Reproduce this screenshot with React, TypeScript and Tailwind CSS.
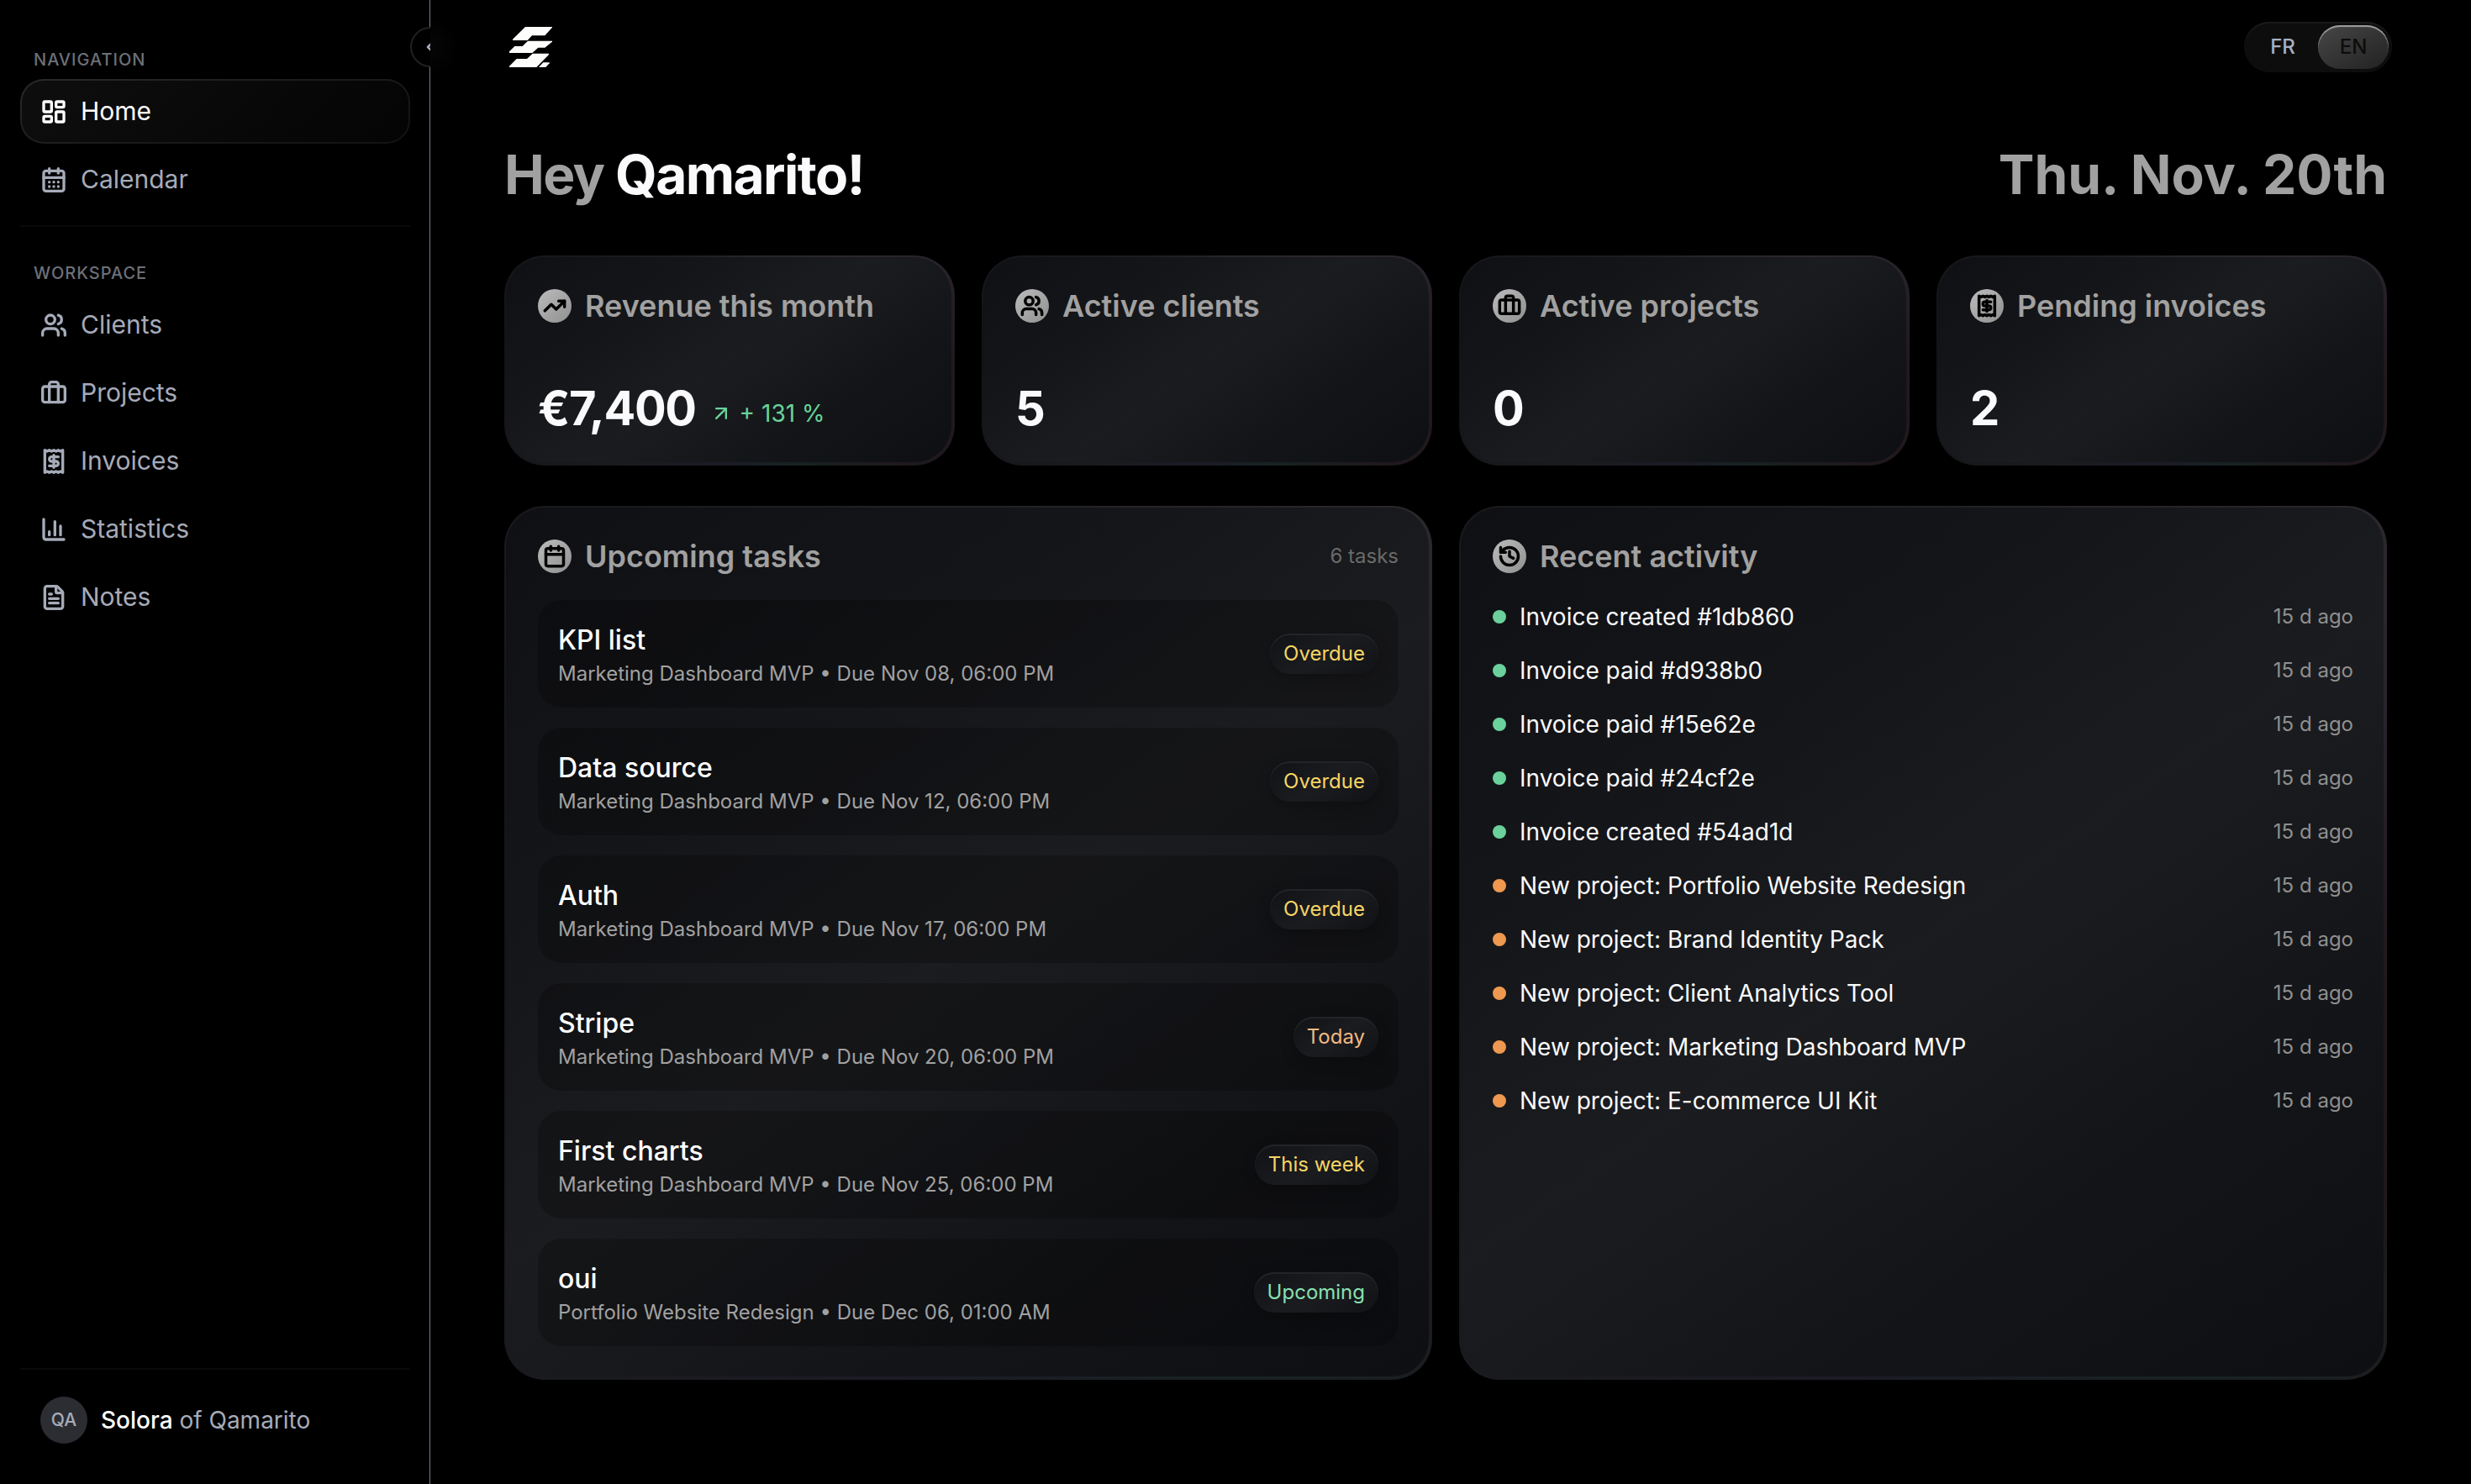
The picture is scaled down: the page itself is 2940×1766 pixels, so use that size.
import React, { useState } from "react";
import {
  ArrowUpRight,
  Briefcase,
  Calendar,
  CalendarDays,
  ChartColumn,
  ChevronLeft,
  FileText,
  History,
  LayoutDashboard,
  Receipt,
  TrendingUp,
  Users,
  type LucideIcon,
} from "lucide-react";
import clsx from "clsx";

// glass surface: diagonal sheen inside, tinted rim around it
const glass =
  "rounded-[48px] border-t-2 border-l-2 border-r-4 border-b-4 border-transparent [background:linear-gradient(145deg,#0f1014_0%,#151619_30%,#1b1c1f_50%,#131417_76%,#0e0f13_100%)_padding-box,conic-gradient(#232327_0deg,#2b272c_50deg,#28232a_65deg,#21191f_90deg,#1f181c_118deg,#182222_146deg,#1c1b27_190deg,#1a1b1e_225deg,#121317_270deg,#19191c_310deg,#232327_360deg)_border-box]";

const mainNav = [
  { label: "Home", icon: LayoutDashboard },
  { label: "Calendar", icon: CalendarDays },
];

const workspaceNav = [
  { label: "Clients", icon: Users },
  { label: "Projects", icon: Briefcase },
  { label: "Invoices", icon: Receipt },
  { label: "Statistics", icon: ChartColumn },
  { label: "Notes", icon: FileText },
];

const stats = [
  { title: "Revenue this month", value: "€7,400", trend: "+ 131 %", icon: TrendingUp },
  { title: "Active clients", value: "5", icon: Users },
  { title: "Active projects", value: "0", icon: Briefcase },
  { title: "Pending invoices", value: "2", icon: Receipt },
];

const tasks = [
  { name: "KPI list", project: "Marketing Dashboard MVP", due: "Nov 08, 06:00 PM", status: "Overdue" },
  { name: "Data source", project: "Marketing Dashboard MVP", due: "Nov 12, 06:00 PM", status: "Overdue" },
  { name: "Auth", project: "Marketing Dashboard MVP", due: "Nov 17, 06:00 PM", status: "Overdue" },
  { name: "Stripe", project: "Marketing Dashboard MVP", due: "Nov 20, 06:00 PM", status: "Today" },
  { name: "First charts", project: "Marketing Dashboard MVP", due: "Nov 25, 06:00 PM", status: "This week" },
  { name: "oui", project: "Portfolio Website Redesign", due: "Dec 06, 01:00 AM", status: "Upcoming" },
];

const statusColors: Record<string, string> = {
  Overdue: "text-[#f5d565]",
  Today: "text-[#efb983]",
  "This week": "text-[#f5d565]",
  Upcoming: "text-[#86e0b3]",
};

const activity = [
  { text: "Invoice created #1db860", kind: "invoice" },
  { text: "Invoice paid #d938b0", kind: "invoice" },
  { text: "Invoice paid #15e62e", kind: "invoice" },
  { text: "Invoice paid #24cf2e", kind: "invoice" },
  { text: "Invoice created #54ad1d", kind: "invoice" },
  { text: "New project: Portfolio Website Redesign", kind: "project" },
  { text: "New project: Brand Identity Pack", kind: "project" },
  { text: "New project: Client Analytics Tool", kind: "project" },
  { text: "New project: Marketing Dashboard MVP", kind: "project" },
  { text: "New project: E-commerce UI Kit", kind: "project" },
];

const Logo = () => (
  <svg width="51" height="48" viewBox="0 0 153 144" fill="#fdfdfb">
    <path d="M57 0H153V2L127 31H81L65 48H12V44Z" />
    <path d="M66 50H153V53L127 74H103L82 93H0V88L19 69H47Z" />
    <path d="M83 95H141V99L97 144H0V140L26 114H63Z" />
    <path d="M121 127H143V130L130 144H105Z" />
  </svg>
);

const NavItem = ({
  label,
  icon: Icon,
  active,
  onClick,
}: {
  label: string;
  icon: LucideIcon;
  active: boolean;
  onClick: () => void;
}) => (
  <button
    onClick={onClick}
    className={clsx(
      "flex h-[77px] w-full items-center gap-4 rounded-[28px] border-2 border-transparent px-[22px] text-[30px]",
      active
        ? "text-white [background:linear-gradient(135deg,#0e0e0e,#040404)_padding-box,linear-gradient(165deg,#2a2a2c,#1b1b1d_50%,#121213)_border-box]"
        : "text-[#a6abb9]"
    )}
  >
    <Icon size={32} strokeWidth={2.5} />
    {label}
  </button>
);

const CardTitle = ({ title, icon: Icon }: { title: string; icon: LucideIcon }) => (
  <div className="flex h-10 items-center gap-4">
    <span className="flex size-10 items-center justify-center rounded-full bg-linear-to-br from-[#bcbcbc] to-[#909090]">
      <Icon size={28} strokeWidth={3} color="#000" />
    </span>
    <h2 className="text-[36px] font-semibold text-[#a1a1a1]">{title}</h2>
  </div>
);

const Sidebar = () => {
  const [current, setCurrent] = useState("Home");

  return (
    <aside className="relative flex h-full w-[512px] shrink-0 flex-col overflow-hidden px-6 pt-14 shadow-[inset_-1px_0_#737e89]">
      <p className="mb-2 pl-4 text-[20px] leading-[30px] font-medium tracking-[0.05em] text-[#6c7078]">NAVIGATION</p>
      <nav className="flex flex-col gap-1">
        {mainNav.map((item) => (
          <NavItem key={item.label} {...item} active={current === item.label} onClick={() => setCurrent(item.label)} />
        ))}
      </nav>
      <hr className="mt-4 border-t-2 border-[#0a0a0a]" />
      <p className="mt-10 mb-2 pl-4 text-[20px] leading-[30px] font-medium tracking-[0.05em] text-[#6c7078]">
        WORKSPACE
      </p>
      <nav className="flex flex-col gap-1">
        {workspaceNav.map((item) => (
          <NavItem key={item.label} {...item} active={current === item.label} onClick={() => setCurrent(item.label)} />
        ))}
      </nav>

      <div className="mt-auto flex h-[138px] items-start gap-4 border-t-2 border-[#0a0a0a] pt-8 pl-6">
        <span className="flex size-14 items-center justify-center rounded-full bg-[#2b2d32] text-[21px] font-medium text-[#a6abb9]">
          QA
        </span>
        <p className="text-[28px] leading-14 text-[#a6abb9]">
          <span className="font-medium text-white">Solora</span> of Qamarito
        </p>
      </div>

      {/* collapse handle, half of it is cut by the sidebar edge */}
      <button className="absolute top-8 -right-6 flex size-12 items-center justify-center rounded-full border-2 border-[#1f2023] bg-black text-[#a6abb9]">
        <ChevronLeft size={24} strokeWidth={2.5} />
      </button>
    </aside>
  );
};

const LanguageSwitch = () => (
  <div className="flex h-[60px] rounded-full bg-[#0d0d0d] p-1 text-[24px] font-medium shadow-[inset_0_2px_1px_#1b1b1b]">
    <button className="w-[84px] rounded-full text-[#a6b0c3]">FR</button>
    <button className="w-[84px] rounded-full bg-linear-to-br from-[#474747] to-[#222222] text-[#0d0d0d] shadow-[inset_0_2px_1px_#a0a0a0]">
      EN
    </button>
  </div>
);

const App = () => {
  return (
    <div className="flex h-screen w-screen overflow-hidden bg-black font-[Inter,sans-serif] text-white">
      <Sidebar />
      <main className="flex flex-1 flex-col bg-[radial-gradient(circle_at_0_56px,#060606,transparent_36px)] pr-[100px] pl-[88px]">
        <header className="-mr-1.5 flex h-[112px] items-center justify-between pl-1.5">
          <Logo />
          <LanguageSwitch />
        </header>

        <div className="mt-14 flex h-20 items-center justify-between text-[64px] font-bold text-[#a1a1a1]">
          <h1 className="tracking-[-0.025em]">
            Hey <span className="text-[#fafafc]">Qamarito!</span>
          </h1>
          <p>Thu. Nov. 20th</p>
        </div>

        <section className="mt-14 grid grid-cols-4 gap-8">
          {stats.map((stat) => (
            <div key={stat.title} className={clsx(glass, "flex h-[250px] flex-col justify-between pt-[38px] pb-[30px] pl-[38px]")}>
              <CardTitle title={stat.title} icon={stat.icon} />
              <div className="flex items-end gap-4">
                <span className="text-[56px] leading-[68px] font-bold tracking-[-0.025em] text-[#fafafc]">{stat.value}</span>
                {stat.trend && (
                  <span className="flex items-center gap-2 pb-[7px] text-[28px] leading-[42px] text-[#67d39b]">
                    <ArrowUpRight size={28} />
                    {stat.trend}
                  </span>
                )}
              </div>
            </div>
          ))}
        </section>

        <section className="mt-12 grid h-[1040px] grid-cols-2 gap-8">
          <div className={clsx(glass, "pt-[38px] pr-9 pl-[38px]")}>
            <div className="flex items-center justify-between">
              <CardTitle title="Upcoming tasks" icon={Calendar} />
              <span className="text-[24px] text-[#6a6a6a]">6 tasks</span>
            </div>
            <ul className="mt-8 flex flex-col gap-6">
              {tasks.map((task) => (
                <li key={task.name} className="flex h-32 items-center justify-between rounded-[28px] bg-black/22 px-6">
                  <div>
                    <p className="text-[32px] leading-12 font-medium">{task.name}</p>
                    <p className="text-[24px] leading-8 text-[#a1a1a1]">
                      {task.project} • Due {task.due}
                    </p>
                  </div>
                  <span
                    className={clsx(
                      "flex h-12 items-center rounded-full bg-[linear-gradient(145deg,#111215,#1b1c1f_50%,#111215)] px-4 text-[24px] shadow-[inset_0_2px_1px_#242528,0_4px_16px_rgba(0,0,0,0.25)]",
                      statusColors[task.status]
                    )}
                  >
                    {task.status}
                  </span>
                </li>
              ))}
            </ul>
          </div>

          <div className={clsx(glass, "pt-[38px] pr-9 pl-[38px]")}>
            <CardTitle title="Recent activity" icon={History} />
            <ul className="mt-8 flex flex-col gap-6">
              {activity.map((entry) => (
                <li key={entry.text} className="flex h-10 items-center gap-4 text-[28px]">
                  <span
                    className={clsx("size-4 rounded-full", entry.kind === "invoice" ? "bg-[#6bd19c]" : "bg-[#ee9850]")}
                  />
                  <span className="text-[#fafafc]">{entry.text}</span>
                  <span className="ml-auto text-[24px] text-[#8f8f8f]">15 d ago</span>
                </li>
              ))}
            </ul>
          </div>
        </section>
      </main>
    </div>
  );
};

export default App;
